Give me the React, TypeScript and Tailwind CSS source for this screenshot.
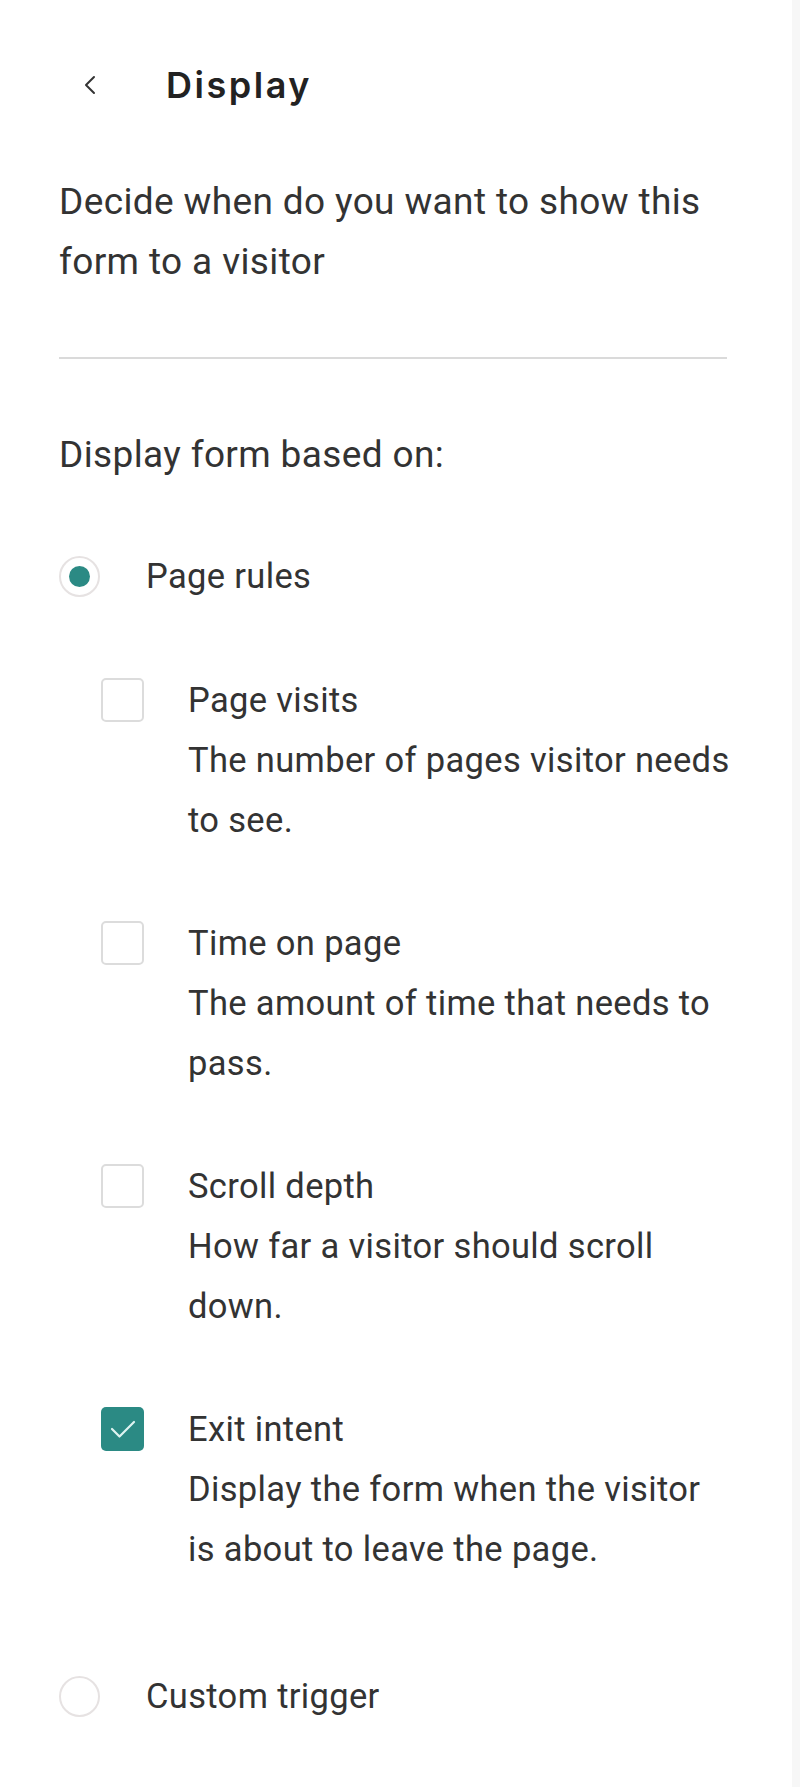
import React from 'react';

type Rule = {
  title: string;
  lines: string[];
  checked?: boolean;
};

const rules: Rule[] = [
  { title: 'Page visits', lines: ['The number of pages visitor needs', 'to see.'] },
  { title: 'Time on page', lines: ['The amount of time that needs to', 'pass.'] },
  { title: 'Scroll depth', lines: ['How far a visitor should scroll', 'down.'] },
  { title: 'Exit intent', lines: ['Display the form when the visitor', 'is about to leave the page.'], checked: true },
];

const Radio: React.FC<{ selected?: boolean }> = ({ selected }) => (
  <div className="w-[41px] h-[41px] shrink-0 rounded-full border-2 border-[#e6e2e2] bg-white flex items-center justify-center">
    {selected && <div className="w-[21px] h-[21px] rounded-full bg-[#2b8a84]" />}
  </div>
);

const Checkbox: React.FC<{ checked?: boolean }> = ({ checked }) =>
  checked ? (
    <div className="w-[43px] h-[44px] shrink-0 rounded-[5px] bg-[#2b8a84] flex items-center justify-center">
      <svg width="28" height="22" viewBox="0 0 28 22" fill="none">
        <path d="M3 11 L10.5 18.5 L25 4" stroke="#dff3f1" strokeWidth="2.2" strokeLinecap="round" strokeLinejoin="round" />
      </svg>
    </div>
  ) : (
    <div className="w-[43px] h-[44px] shrink-0 rounded-[5px] border-2 border-[#dcdcdc] bg-white" />
  );

const RuleItem: React.FC<{ rule: Rule }> = ({ rule }) => (
  <div className="flex items-start">
    <div className="ml-[42px] mt-[8px]">
      <Checkbox checked={rule.checked} />
    </div>
    <div className="ml-[44px] text-[34.5px] leading-[60px] tracking-[0.01em] text-[#333]">
      <div>{rule.title}</div>
      {rule.lines.map((line, i) => (
        <div key={i} className="whitespace-nowrap">{line}</div>
      ))}
    </div>
  </div>
);

export default function App() {
  return (
    <div className="flex min-h-screen w-full bg-white" style={{ fontFamily: 'Roboto, "Noto Sans", sans-serif' }}>
      <div className="flex-1 min-w-0 pl-[59px] pr-[65px]">
        {/* header */}
        <div className="mt-[61px] h-[48px] flex items-center">
          <svg className="ml-[24px] shrink-0" width="14" height="20" viewBox="0 0 14 20" fill="none">
            <path d="M11 2 L3 10 L11 18" stroke="#333" strokeWidth="2" strokeLinecap="round" strokeLinejoin="round" />
          </svg>
          <h1
            className="ml-[69px] text-[36px] font-semibold tracking-[0.07em] text-[#222]"
            style={{ fontFamily: 'Inter, "Noto Sans", sans-serif' }}
          >
            Display
          </h1>
        </div>

        <p className="mt-[63px] text-[37px] leading-[60px] tracking-[0.01em] text-[#333]">
          Decide when do you want to show this form to a visitor
        </p>

        <div className="mt-[65px] h-[2px] bg-[#dadada]" />

        <div className="mt-[66px] text-[37px] leading-[60px] tracking-[0.01em] text-[#333]">
          Display form based on:
        </div>

        <div className="mt-[61px] flex items-center">
          <Radio selected />
          <span className="ml-[46px] text-[34.5px] leading-[60px] tracking-[0.01em] text-[#333]">Page rules</span>
        </div>

        <div className="mt-[64px] flex flex-col gap-[63px]">
          {rules.map((r) => (
            <RuleItem key={r.title} rule={r} />
          ))}
        </div>

        <div className="mt-[87px] flex items-center">
          <Radio />
          <span className="ml-[46px] text-[34.5px] leading-[60px] tracking-[0.01em] text-[#333]">Custom trigger</span>
        </div>
      </div>
      <div className="w-[8px] bg-[#f7f7f7]" />
    </div>
  );
}
